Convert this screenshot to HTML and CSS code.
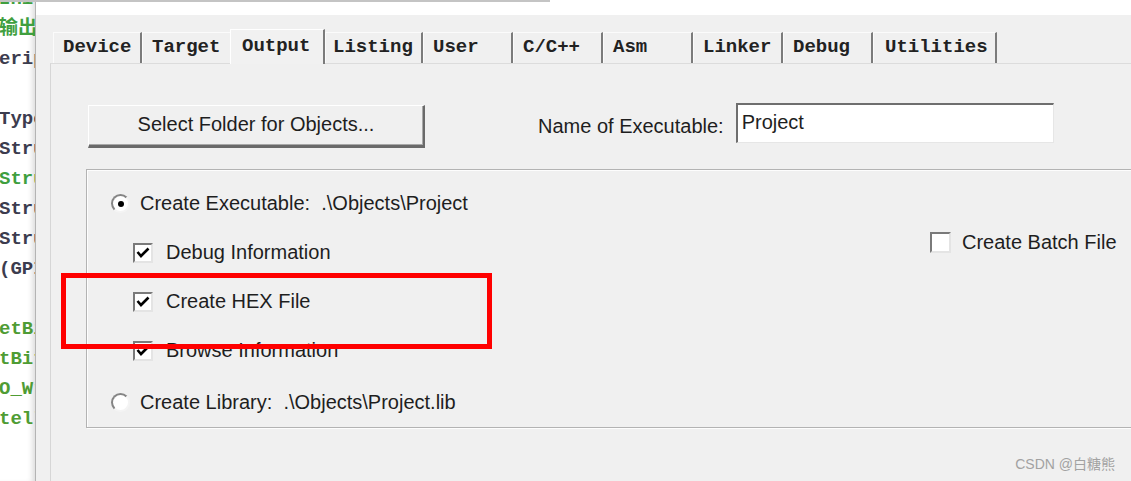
FILE: index.html
```html
<!DOCTYPE html>
<html>
<head>
<meta charset="utf-8">
<title>Options for Target - Output</title>
<link rel="stylesheet" href="styles.css">
</head>
<body>
<div class="topline"></div>
<div class="main">
  <div class="code">
<pre><span class="g">InitStructure</span>
<span class="g">输出模式</span>
eriphClockCmd(
 
TypeDef GPIO_Init
Struct.GPIO_Pin
<span class="g">Struct.GPIO_Mode</span>
Struct.GPIO_Speed
Struct.GPIO_OType
(GPIOA, &amp;GPIO_Init
 
<span class="g2">etBits(GPIOA</span>
<span class="g2">tBits(GPIOA</span>
<span class="g2">O_WriteBit</span>
<span class="g2">tell</span></pre>
  </div>
  <div class="dialog">
    <div class="dialog-top"></div>
    <div class="dialog-body">
      <div class="tabs">
        <div class="tab tab-first">Device</div>
        <div class="tab">Target</div>
        <div class="tab tab-active">Output</div>
        <div class="tab tab-wide">Listing</div>
        <div class="tab">User</div>
        <div class="tab">C/C++</div>
        <div class="tab">Asm</div>
        <div class="tab">Linker</div>
        <div class="tab">Debug</div>
        <div class="tab tab-xwide">Utilities</div>
      </div>
      <div class="panel">
        <div class="row1">
          <div class="btn">Select Folder for Objects...</div>
          <div class="label">Name of Executable:</div>
          <div class="input">Project</div>
        </div>
        <div class="group">
          <div class="opts">
            <div class="opt"><span class="radio on"></span>Create Executable:&nbsp; .\Objects\Project</div>
            <div class="opt sub"><span class="check"><svg viewBox="0 0 16 16"><path d="M2.5 7 L6 11 L13.5 3.5" fill="none" stroke="#000" stroke-width="2.6"/></svg></span>Debug Information</div>
            <div class="opt sub"><span class="check"><svg viewBox="0 0 16 16"><path d="M2.5 7 L6 11 L13.5 3.5" fill="none" stroke="#000" stroke-width="2.6"/></svg></span>Create HEX File</div>
            <div class="opt sub"><span class="check"><svg viewBox="0 0 16 16"><path d="M2.5 7 L6 11 L13.5 3.5" fill="none" stroke="#000" stroke-width="2.6"/></svg></span>Browse Information</div>
            <div class="opt last"><span class="radio"></span>Create Library:&nbsp; .\Objects\Project.lib</div>
          </div>
          <div class="side">
            <div class="opt"><span class="check batch"></span>Create Batch File</div>
          </div>
        </div>
      </div>
    </div>
  </div>
</div>
<div class="mark"></div>
<div class="wm">CSDN @白糖熊</div>
</body>
</html>
```

FILE: styles.css
```css
* { box-sizing: border-box; }
html, body { margin: 0; padding: 0; }
body {
  width: 1131px;
  height: 481px;
  overflow: hidden;
  position: relative;
  background: #fff;
  font-family: "Liberation Sans", Arial, sans-serif;
}
.topline { height: 2px; width: 550px; background: #c4c4c4; }
.main { display: flex; height: 479px; }

.code {
  width: 36px;
  flex: none;
  overflow: hidden;
  background: #fff;
  border-right: 1px solid #b4b4b4;
  box-shadow: inset -6px 0 6px -4px rgba(0,0,0,0.16);
}
.code pre {
  margin: -18px 0 0 -1px;
  font: bold 19px/30px "Liberation Mono", "Noto Sans CJK SC", monospace;
  color: #3c3c4e;
}
.code .g { color: #3f9f3f; }
.code .g2 { color: #4f9c34; }

.dialog { flex: 1; display: flex; flex-direction: column; overflow: hidden; }
.dialog-top { height: 13px; background: #fff; flex: none; }
.dialog-body { flex: 1; background: #f0f0f0; padding: 14px 0 0 14px; }

.tabs { display: flex; align-items: flex-end; height: 34px; padding-left: 3px; }
.tab {
  width: 90px;
  height: 31px;
  padding-left: 9px;
  border-top: 1px solid #fbfbfb;
  border-left: 1px solid #fbfbfb;
  border-right: 2px solid #7b7b7b;
  font: bold 19px/29px "Liberation Mono", monospace;
  color: #222;
  white-space: nowrap;
  flex: none;
}
.tab-first { width: 89px; }
.tab-wide { width: 98px; padding-left: 7px; }
.tab-xwide { width: 124px; padding-left: 11px; }
.tab-active {
  width: 95px;
  height: 35px;
  margin-left: -2px;
  margin-bottom: -1px;
  padding-left: 11px;
  line-height: 32px;
  position: relative;
  z-index: 1;
  background: #f1f1f1;
  border-top-color: #fff;
  border-left-color: #fff;
}

.panel {
  border-top: 1px solid #dcdcdc;
  border-left: 1px solid #d6d6d6;
  height: 420px;
}
.row1 { display: flex; align-items: flex-start; margin: 39px 0 0 37px; }
.btn {
  width: 337px;
  height: 43px;
  margin-top: 2px;
  background: #f0f0f0;
  border-top: 1px solid #fff;
  border-left: 1px solid #fff;
  border-right: 2px solid #6a6a6a;
  border-bottom: 3px solid #6a6a6a;
  box-shadow: inset -1px -1px #a8a8a8;
  display: flex;
  align-items: center;
  justify-content: center;
  padding-bottom: 2px;
  font-size: 20px;
  color: #1e1e1e;
  flex: none;
}
.label { margin: 13px 0 0 113px; font-size: 20px; line-height: 20px; color: #1e1e1e; white-space: nowrap; }
.input {
  width: 318px;
  height: 40px;
  margin-left: 12px;
  background: #fff;
  border-top: 2px solid #6e6e6e;
  border-left: 2px solid #6e6e6e;
  border-right: 1px solid #e6e6e6;
  border-bottom: 1px solid #e6e6e6;
  padding: 7px 0 0 4px;
  font-size: 20px;
  line-height: 20px;
  color: #1e1e1e;
  flex: none;
}

.group {
  margin: 21px 0 0 35px;
  width: 1100px;
  height: 259px;
  border: 1px solid #b3b3b3;
  box-shadow: inset 1px 1px #fdfdfd, 1px 1px #fdfdfd;
  display: flex;
}
.opts { width: 843px; flex: none; padding: 9px 0 0 24px; }
.side { padding-top: 48px; }
.opt {
  height: 49px;
  display: flex;
  align-items: center;
  font-size: 20px;
  color: #1e1e1e;
  white-space: nowrap;
}
.opt.sub { padding-left: 22px; }
.opt.last { margin-top: 3px; }

.radio {
  width: 19px;
  height: 19px;
  border-radius: 50%;
  background: #fff;
  border: 2px solid;
  border-color: #858585 #f4f4f4 #f4f4f4 #858585;
  margin-right: 10px;
  flex: none;
  display: flex;
  align-items: center;
  justify-content: center;
}
.radio.on::after {
  content: "";
  width: 6px;
  height: 6px;
  border-radius: 50%;
  background: #000;
}
.check {
  width: 20px;
  height: 20px;
  background: #fff;
  border: 2px solid;
  border-color: #7a7a7a #e4e4e4 #e4e4e4 #7a7a7a;
  margin-right: 13px;
  flex: none;
  display: block;
}
.check svg { display: block; width: 16px; height: 16px; }
.check.batch { width: 21px; height: 21px; margin-right: 11px; }

.mark {
  position: absolute;
  left: 61px;
  top: 273px;
  width: 431px;
  height: 76px;
  border: 5px solid #ff0000;
}
.wm {
  position: absolute;
  right: 16px;
  top: 455px;
  font: 14px/18px "Liberation Sans", "Noto Sans CJK SC", sans-serif;
  color: #a2a2a2;
  white-space: nowrap;
}
```
